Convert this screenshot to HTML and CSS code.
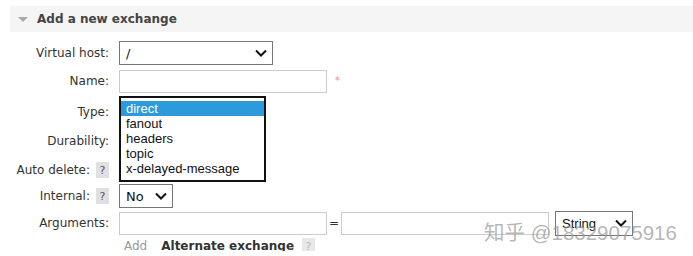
FILE: index.html
```html
<!DOCTYPE html>
<html>
<head>
<meta charset="utf-8">
<title>Add a new exchange</title>
<link rel="stylesheet" href="styles.css">
</head>
<body>
<div class="section">
  <h2 class="section-title"><span class="tri"></span>Add a new exchange</h2>
  <form class="form">
    <label class="lbl">Virtual host:</label>
    <div class="ctl">
      <span class="sel sel-vhost"><select><option>/</option></select><svg class="chev" width="12" height="8" viewBox="0 0 12 8"><path d="M1 1.5 L6 6.5 L11 1.5" fill="none" stroke="#111" stroke-width="2"/></svg></span>
    </div>

    <label class="lbl">Name:</label>
    <div class="ctl"><input class="txt" type="text"><span class="req">*</span></div>

    <label class="lbl">Type:</label>
    <div class="ctl">
      <span class="sel sel-type"><select><option>direct</option></select></span>
      <ul class="droplist">
        <li class="on">direct</li>
        <li>fanout</li>
        <li>headers</li>
        <li>topic</li>
        <li>x-delayed-message</li>
      </ul>
    </div>

    <label class="lbl">Durability:</label>
    <div class="ctl"><span class="sel sel-type"><select><option>Durable</option></select></span></div>

    <label class="lbl">Auto delete: <span class="help">?</span></label>
    <div class="ctl"><span class="sel sel-type"><select><option>No</option></select></span></div>

    <label class="lbl">Internal: <span class="help">?</span></label>
    <div class="ctl">
      <span class="sel sel-no"><select><option>No</option></select><svg class="chev" width="12" height="8" viewBox="0 0 12 8"><path d="M1 1.5 L6 6.5 L11 1.5" fill="none" stroke="#111" stroke-width="2"/></svg></span>
    </div>

    <label class="lbl">Arguments:</label>
    <div class="ctl args">
      <input class="txt" type="text"><span class="eq">=</span><input class="txt" type="text">
      <span class="sel sel-string"><select><option>String</option></select><svg class="chev" width="12" height="8" viewBox="0 0 12 8"><path d="M1 1.5 L6 6.5 L11 1.5" fill="none" stroke="#111" stroke-width="2"/></svg></span>
    </div>

    <span></span>
    <div class="ctl extra">
      <span class="add">Add</span>
      <span class="alt">Alternate exchange</span>
      <span class="help help-light">?</span>
    </div>
  </form>
</div>
<div class="watermark">知乎 @18329075916</div>
</body>
</html>
```

FILE: styles.css
```css
body{margin:0;background:#fff;font-family:"DejaVu Sans",Verdana,sans-serif;font-size:12px;color:#333;}
.section{padding-top:6px;}
.section-title{margin:0 0 0 10px;height:26px;background:#f5f5f5;font-size:12px;font-weight:bold;color:#444;display:flex;align-items:center;}
.tri{width:0;height:0;border-left:5px solid transparent;border-right:5px solid transparent;border-top:5px solid #aaa;margin:0 9px 0 8px;}

.form{display:grid;grid-template-columns:99px auto;column-gap:10px;grid-template-rows:28px 28px 34px 24px 34px 18px 36px 10px;margin:7px 0 0 10px;}
.lbl{align-self:center;text-align:right;white-space:nowrap;color:#333;display:flex;justify-content:flex-end;align-items:center;gap:6px;}
.ctl{align-self:center;display:flex;align-items:center;position:relative;}

.sel{position:relative;display:inline-block;}
.sel select{appearance:none;-webkit-appearance:none;margin:0;border:1px solid #767676;border-radius:0;background:#fff;font-family:"DejaVu Sans",Verdana,sans-serif;font-size:13px;color:#111;padding:0 0 0 6px;height:24px;}
.chev{position:absolute;right:6px;top:8px;pointer-events:none;}
.sel-vhost select{width:154px;}
.sel-type select{width:100px;}
.sel-no select{width:54px;}
.sel-string select{width:78px;height:25px;font-family:"Liberation Sans",Arial,sans-serif;}

.txt{margin:0;width:208px;height:23px;box-sizing:border-box;border:1px solid #ccc;padding:0 4px;}
.req{color:#e88;margin-left:8px;font-size:10px;margin-top:-2px;}
.args .eq{margin:0 2px;color:#333;}
.args .sel{margin-left:6px;}

.droplist{position:absolute;left:0;top:-4px;z-index:2;margin:0;padding:3px 0 4px;list-style:none;width:143px;background:#fff;border:2px solid #111;font-family:"Liberation Sans",Arial,sans-serif;font-size:13px;color:#111;}
.droplist li{height:15px;line-height:15px;padding-left:5px;}
.droplist li.on{background:#2d9bdb;color:#fff;}

.help{display:inline-flex;align-items:center;justify-content:center;width:13px;height:16px;background:#e0e0e0;color:#555;font-size:11px;}
.extra{align-self:center;}
.add{color:#999;margin-left:5px;}
.alt{font-weight:bold;color:#333;margin-left:14px;}
.help-light{color:#bbb;background:#e8e8e8;margin-left:8px;}

.watermark{position:absolute;left:484px;top:216px;font-family:"Liberation Sans","Noto Sans CJK SC",sans-serif;font-size:20.5px;color:rgba(150,150,150,0.7);white-space:nowrap;}
```
